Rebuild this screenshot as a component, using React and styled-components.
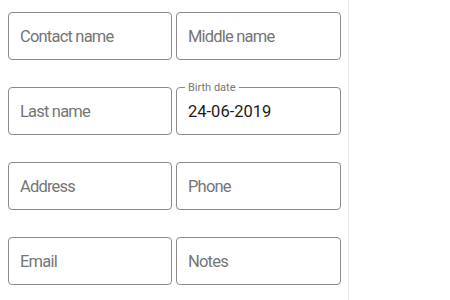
import React from "react";
import styled, { createGlobalStyle } from "styled-components";

const Global = createGlobalStyle`
  html, body { margin: 0; padding: 0; background: #ffffff; }
  body { font-family: Roboto, "Noto Sans", Arial, sans-serif; }
`;

const Panel = styled.div`
  box-sizing: border-box;
  width: 349px;
  height: 300px;
  border-right: 1px solid #e6e6e6;
  padding: 12px 8px 0 8px;
`;

const Grid = styled.div`
  display: grid;
  grid-template-columns: 164px 165px;
  column-gap: 4px;
  row-gap: 27px;
`;

const Field = styled.div`
  position: relative;
  box-sizing: border-box;
  height: 48px;
  border: 1px solid #8a8a8a;
  border-radius: 4px;
  padding: 0 11px;
  display: flex;
  align-items: center;
  font-size: 16.5px;
  letter-spacing: ${(p) => (p.$filled ? "0" : "-0.8px")};
  color: ${(p) => (p.$filled ? "#1c1c1c" : "#757575")};
`;

const FloatLabel = styled.span`
  position: absolute;
  top: -7px;
  left: 8px;
  padding: 0 3px;
  background: #ffffff;
  font-size: 11px;
  line-height: 13px;
  letter-spacing: 0;
  color: #757575;
`;

const fields = [
  { label: "Contact name" },
  { label: "Middle name" },
  { label: "Last name" },
  { label: "Birth date", value: "24-06-2019" },
  { label: "Address" },
  { label: "Phone" },
  { label: "Email" },
  { label: "Notes" },
];

export default function App() {
  return (
    <>
      <Global />
      <Panel>
        <Grid>
          {fields.map((f) => (
            <Field key={f.label} $filled={!!f.value}>
              {f.value ? (
                <>
                  <FloatLabel>{f.label}</FloatLabel>
                  {f.value}
                </>
              ) : (
                f.label
              )}
            </Field>
          ))}
        </Grid>
      </Panel>
    </>
  );
}
